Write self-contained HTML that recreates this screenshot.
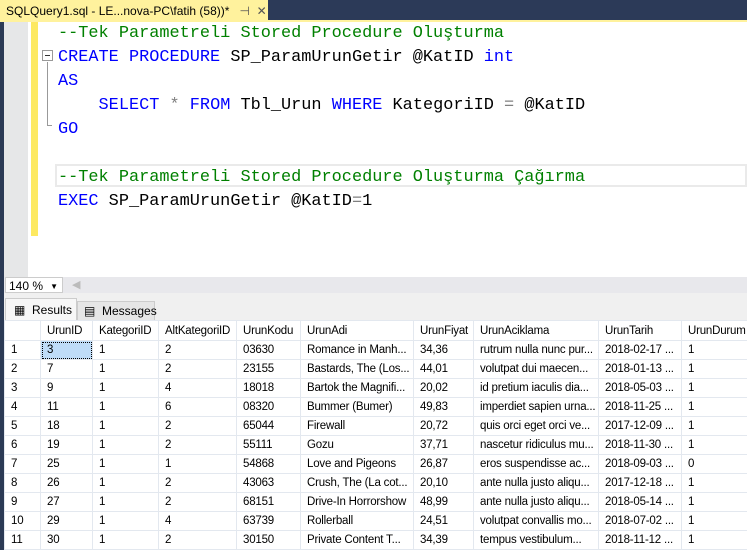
<!DOCTYPE html>
<html><head><style>
*{margin:0;padding:0;box-sizing:border-box}
body{width:747px;height:538px;overflow:hidden;background:#2b3a55;position:relative;font-family:"Liberation Sans",sans-serif}
.tabbar{position:absolute;left:0;top:0;width:747px;height:22px;background:#2c3a58;border-bottom:2px solid #fff29d}
.tab{position:absolute;left:0;top:0;width:268px;height:22px;background:#fff29d;font-size:12px;color:#000;padding:4px 0 0 6px;white-space:nowrap}
.ed{position:absolute;left:4px;top:22px;width:743px;height:255px;background:#fff}
.gut{position:absolute;left:0;top:0;width:24px;height:255px;background:#e6e7e8}
.ym{position:absolute;left:27px;top:0;width:7px;height:214px;background:#fde961}
.code{position:absolute;left:54px;top:0;font-family:"Liberation Mono",monospace;font-size:16.9px;line-height:24px;white-space:pre;color:#000}
.c{color:#008000}.k{color:#0000ff}.g{color:#808080}
.cur{position:absolute;left:51px;top:142px;width:692px;height:23px;border:2px solid #eaeaea}
.fold{position:absolute;left:38px;top:28px;width:11px;height:11px;border:1px solid #999;background:#fff}
.fold:after{content:"";position:absolute;left:2px;top:4px;width:5px;height:1px;background:#333}
.fl{position:absolute;left:43px;top:40px;width:1px;height:64px;background:#999}
.fl2{position:absolute;left:43px;top:103px;width:5px;height:1px;background:#999}
.bar{position:absolute;left:4px;top:277px;width:743px;height:16px;background:#e8e8ec}
.combo{position:absolute;left:1px;top:0px;width:58px;height:16px;background:#fff;border:1px solid #ccc;font-size:12px;padding:1px 0 0 3px}
.res{position:absolute;left:4px;top:293px;width:743px;height:245px;background:#f0f0f0}
.t1{position:absolute;left:1px;top:5px;width:72px;height:23px;background:#f7f7f7;border:1px solid #ccc;border-bottom:none;font-size:12px;padding:4px 0 0 8px;white-space:nowrap}
.t2{position:absolute;left:73px;top:8px;width:78px;height:19px;background:#e6e6e6;border:1px solid #ccc;border-bottom:none;font-size:12px;padding:2px 0 0 6px;white-space:nowrap}
table{position:absolute;left:4px;top:320px;width:747px;border-collapse:collapse;font-size:11.5px;letter-spacing:-0.2px;background:#fff;table-layout:fixed}
td{height:19px;border:1px solid #e3e8ef;padding:0 0 0 6px;white-space:nowrap;overflow:hidden}
tr.h td{height:20px;background:#fff}
.sel{background:#bfdcf8;outline:1px dotted #000;outline-offset:-2px}
</style></head><body>
<div class="tabbar"><div class="tab">SQLQuery1.sql - LE...nova-PC\fatih (58))* &nbsp;&nbsp;<span style="color:#555">⊣</span>&nbsp;&nbsp;<span style="color:#555">✕</span></div></div>
<div class="ed">
<div class="gut"></div><div class="ym"></div>
<div class="cur"></div>
<div class="fold"></div><div class="fl"></div><div class="fl2"></div>
<div class="code"><span class="c">--Tek Parametreli Stored Procedure Oluşturma</span>
<span class="k">CREATE PROCEDURE</span> SP_ParamUrunGetir @KatID <span class="k">int</span>
<span class="k">AS</span>
    <span class="k">SELECT</span> <span class="g">*</span> <span class="k">FROM</span> Tbl_Urun <span class="k">WHERE</span> KategoriID <span class="g">=</span> @KatID
<span class="k">GO</span>

<span class="c">--Tek Parametreli Stored Procedure Oluşturma Çağırma</span>
<span class="k">EXEC</span> SP_ParamUrunGetir @KatID<span class="g">=</span>1</div>
</div>
<div class="bar"><div class="combo">140 % <span style="float:right;font-size:8px;margin:3px 4px 0 0">▼</span></div><span style="position:absolute;left:68px;top:1px;color:#bbb;font-size:11px">◀</span></div>
<div class="res">
<div class="t1">▦ &nbsp;Results</div><div class="t2">▤ &nbsp;Messages</div>
</div>
<table>
<colgroup><col style="width:36px"><col style="width:52px"><col style="width:66px"><col style="width:78px"><col style="width:64px"><col style="width:113px"><col style="width:60px"><col style="width:125px"><col style="width:83px"><col style="width:70px"></colgroup>
<tr class="h"><td></td><td>UrunID</td><td>KategoriID</td><td>AltKategoriID</td><td>UrunKodu</td><td>UrunAdi</td><td>UrunFiyat</td><td>UrunAciklama</td><td>UrunTarih</td><td>UrunDurum</td></tr>
<tr><td>1</td><td class="sel">3</td><td>1</td><td>2</td><td>03630</td><td>Romance in Manh...</td><td>34,36</td><td>rutrum nulla nunc pur...</td><td>2018-02-17 ...</td><td>1</td></tr>
<tr><td>2</td><td>7</td><td>1</td><td>2</td><td>23155</td><td>Bastards, The (Los...</td><td>44,01</td><td>volutpat dui maecen...</td><td>2018-01-13 ...</td><td>1</td></tr>
<tr><td>3</td><td>9</td><td>1</td><td>4</td><td>18018</td><td>Bartok the Magnifi...</td><td>20,02</td><td>id pretium iaculis dia...</td><td>2018-05-03 ...</td><td>1</td></tr>
<tr><td>4</td><td>11</td><td>1</td><td>6</td><td>08320</td><td>Bummer (Bumer)</td><td>49,83</td><td>imperdiet sapien urna...</td><td>2018-11-25 ...</td><td>1</td></tr>
<tr><td>5</td><td>18</td><td>1</td><td>2</td><td>65044</td><td>Firewall</td><td>20,72</td><td>quis orci eget orci ve...</td><td>2017-12-09 ...</td><td>1</td></tr>
<tr><td>6</td><td>19</td><td>1</td><td>2</td><td>55111</td><td>Gozu</td><td>37,71</td><td>nascetur ridiculus mu...</td><td>2018-11-30 ...</td><td>1</td></tr>
<tr><td>7</td><td>25</td><td>1</td><td>1</td><td>54868</td><td>Love and Pigeons</td><td>26,87</td><td>eros suspendisse ac...</td><td>2018-09-03 ...</td><td>0</td></tr>
<tr><td>8</td><td>26</td><td>1</td><td>2</td><td>43063</td><td>Crush, The (La cot...</td><td>20,10</td><td>ante nulla justo aliqu...</td><td>2017-12-18 ...</td><td>1</td></tr>
<tr><td>9</td><td>27</td><td>1</td><td>2</td><td>68151</td><td>Drive-In Horrorshow</td><td>48,99</td><td>ante nulla justo aliqu...</td><td>2018-05-14 ...</td><td>1</td></tr>
<tr><td>10</td><td>29</td><td>1</td><td>4</td><td>63739</td><td>Rollerball</td><td>24,51</td><td>volutpat convallis mo...</td><td>2018-07-02 ...</td><td>1</td></tr>
<tr><td>11</td><td>30</td><td>1</td><td>2</td><td>30150</td><td>Private Content T...</td><td>34,39</td><td>tempus vestibulum...</td><td>2018-11-12 ...</td><td>1</td></tr>
</table>
</body></html>
